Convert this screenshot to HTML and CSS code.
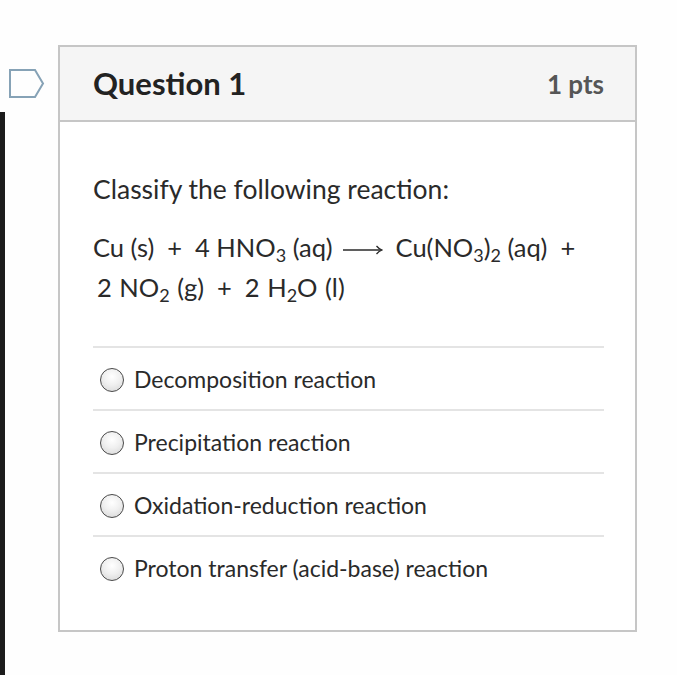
FILE: index.html
```html
<!DOCTYPE html>
<html>
<head>
<meta charset="utf-8">
<link rel="stylesheet" href="styles.css">
</head>
<body>
<div class="page">
  <div class="gutter">
    <svg class="flag" width="36" height="30" viewBox="0 0 36 30">
      <polygon points="1,1 26,1 34,14.5 26,28 1,28" fill="none" stroke="#86a2b6" stroke-width="2"/>
    </svg>
    <div class="bar"></div>
  </div>
  <div class="card">
    <div class="header">
      <span class="title">Question 1</span>
      <span class="pts">1 pts</span>
    </div>
    <div class="body">
      <p class="prompt">Classify the following reaction:</p>
      <p class="equation">Cu (s)<span class="op">+</span>4 HNO<sub>3</sub> (aq)<svg class="arrow" width="40" height="12" viewBox="0 0 40 12"><line x1="0" y1="6" x2="38.5" y2="6" stroke="#2a2a2a" stroke-width="1.3"/><path d="M33.5 2 Q36 5 39 6 Q36 7 33.5 10" fill="none" stroke="#2a2a2a" stroke-width="1.3"/></svg>Cu(NO<sub>3</sub>)<sub>2</sub> (aq)<span class="op">+</span><br><span class="l2">2 NO<sub>2</sub> (g)<span class="op">+</span>2 H<sub>2</sub>O (l)</span></p>
      <div class="answers">
        <label class="answer"><span class="radio"></span>Decomposition reaction</label>
        <label class="answer"><span class="radio"></span>Precipitation reaction</label>
        <label class="answer"><span class="radio"></span>Oxidation-reduction reaction</label>
        <label class="answer"><span class="radio"></span>Proton transfer (acid-base) reaction</label>
      </div>
    </div>
  </div>
</div>
</body>
</html>
```

FILE: styles.css
```css
html, body {
  margin: 0;
  padding: 0;
  background: #fefefe;
}
body {
  font-family: Lato, "Liberation Sans", sans-serif;
  color: #2a2a2a;
}
.page {
  display: flex;
  min-height: 675px;
  width: 677px;
}
.gutter {
  width: 58px;
  display: flex;
  flex-direction: column;
  align-items: flex-start;
}
.flag {
  margin-top: 69px;
  margin-left: 9px;
  display: block;
}
.bar {
  margin-top: 13px;
  width: 5px;
  flex: 1;
  background: #1c1c1c;
}
.card {
  margin-top: 45px;
  width: 575px;
  height: 583px;
  border: 2px solid #c6c6c6;
  background: #fff;
  align-self: flex-start;
}
.header {
  height: 73px;
  background: #f5f5f5;
  border-bottom: 2px solid #c6c6c6;
  display: flex;
  align-items: center;
  justify-content: space-between;
  padding: 0 31px 0 33px;
}
.title {
  font-weight: 700;
  font-size: 31px;
  color: #222;
  padding-bottom: 2px;
}
.pts {
  font-weight: 700;
  font-size: 26px;
  color: #565656;
}
.body {
  padding: 51px 31px 0 33px;
}
.prompt {
  margin: 0;
  font-size: 26.5px;
  line-height: 32px;
}
.equation {
  margin: 22px 0 0;
  font-size: 25.5px;
  line-height: 40px;
}
.equation sub {
  font-size: 18px;
  vertical-align: -5px;
  line-height: 0;
}
.l2 {
  padding-left: 4px;
  word-spacing: 1px;
}
.op {
  padding: 0 13px;
}
.arrow {
  display: inline-block;
  vertical-align: middle;
  margin: 0 13px 0 10px;
  position: relative;
  top: -1px;
}
.answers {
  margin-top: 39px;
}
.answer {
  display: flex;
  align-items: center;
  height: 61px;
  border-top: 2px solid #e4e4e4;
  font-size: 23px;
}
.radio {
  width: 24px;
  height: 24px;
  border: 1.5px solid #4a4a4a;
  border-radius: 50%;
  background: radial-gradient(circle at 50% 35%, #ffffff 0%, #f0f0f0 45%, #d4d4d4 100%);
  margin: 0 10px 0 7px;
  box-sizing: border-box;
  flex: none;
  position: relative;
  top: 1px;
}
```
